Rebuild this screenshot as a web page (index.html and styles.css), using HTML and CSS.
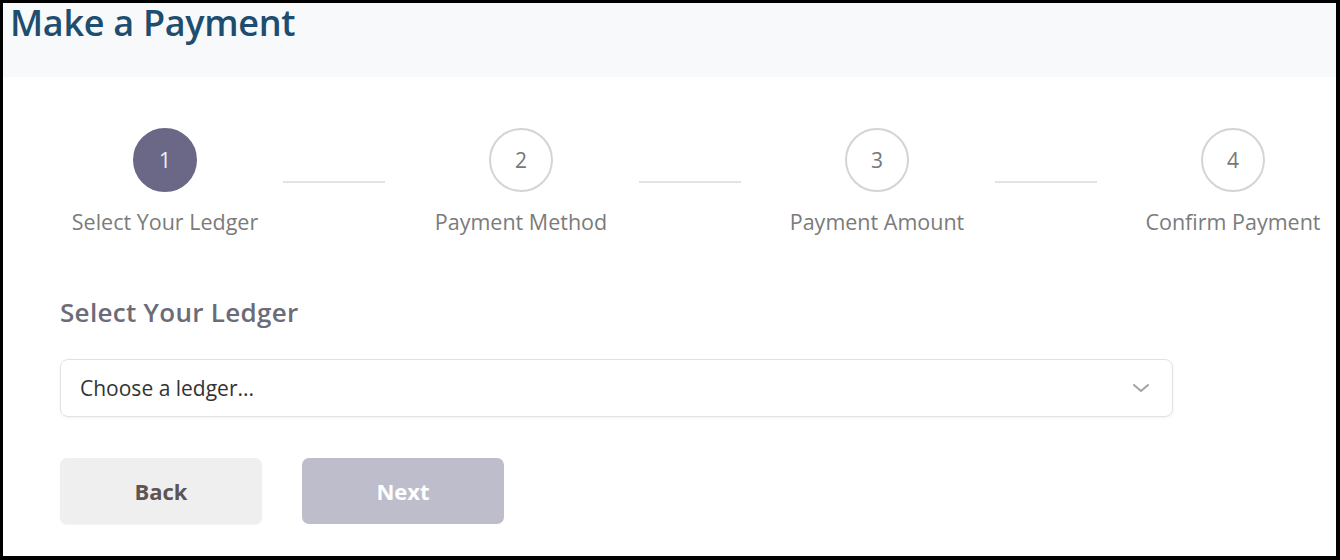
FILE: index.html
```html
<!DOCTYPE html>
<html lang="en">
<head>
<meta charset="utf-8">
<title>Make a Payment</title>
<link rel="stylesheet" href="styles.css">
</head>
<body>
<div class="frame">
  <header class="page-header">
    <h1 class="page-title">Make a Payment</h1>
  </header>
  <main class="content">
    <div class="stepper">
      <div class="step step-active">
        <div class="step-circle">1</div>
        <div class="step-label">Select Your Ledger</div>
      </div>
      <div class="connector"></div>
      <div class="step">
        <div class="step-circle">2</div>
        <div class="step-label">Payment Method</div>
      </div>
      <div class="connector"></div>
      <div class="step">
        <div class="step-circle">3</div>
        <div class="step-label">Payment Amount</div>
      </div>
      <div class="connector"></div>
      <div class="step">
        <div class="step-circle">4</div>
        <div class="step-label">Confirm Payment</div>
      </div>
    </div>

    <h2 class="section-title">Select Your Ledger</h2>

    <div class="select">
      <span class="select-text">Choose a ledger...</span>
      <svg class="chevron" width="18" height="10" viewBox="0 0 18 10" aria-hidden="true">
        <path d="M2 2 L9 8 L16 2" fill="none" stroke="#a3a3a3" stroke-width="2" stroke-linecap="round" stroke-linejoin="round"/>
      </svg>
    </div>

    <div class="actions">
      <button class="btn btn-back" type="button">Back</button>
      <button class="btn btn-next" type="button" disabled>Next</button>
    </div>
  </main>
</div>
</body>
</html>
```

FILE: styles.css
```css
* {
  box-sizing: border-box;
}

html, body {
  margin: 0;
  padding: 0;
  background: #000;
}

body {
  font-family: "Open Sans", "Liberation Sans", sans-serif;
  width: 1340px;
  height: 560px;
  padding: 3px 4px 4px 3px;
}

.frame {
  width: 1333px;
  height: 553px;
  background: #ffffff;
  overflow: hidden;
}

.page-header {
  height: 74px;
  background: #f7f9fb;
  padding: 0 0 0 7px;
}

.page-title {
  margin: 0;
  font-size: 36px;
  font-weight: 600;
  line-height: 40px;
  color: #1d4d6f;
  letter-spacing: -0.3px;
}

.content {
  padding: 51px 0 0 57px;
}

.stepper {
  display: flex;
  align-items: flex-start;
  margin-left: 5px;
}

.step {
  width: 200px;
  display: flex;
  flex-direction: column;
  align-items: center;
}

.step-circle {
  width: 64px;
  height: 64px;
  border-radius: 50%;
  border: 2px solid #d4d4d4;
  background: #fff;
  color: #777;
  font-size: 21px;
  display: flex;
  align-items: center;
  justify-content: center;
}

.step-active .step-circle {
  background: #6b6787;
  border-color: #6b6787;
  color: #e8f4fb;
}

.step-label {
  margin-top: 16px;
  font-size: 21.5px;
  line-height: 28px;
  color: #7b7b7b;
  white-space: nowrap;
}

.connector {
  width: 102px;
  height: 2px;
  margin: 53px 36px 0 18px;
  background: #e4e4e4;
}

.section-title {
  margin: 59px 0 0 0;
  font-size: 26px;
  font-weight: 600;
  line-height: 34px;
  color: #6c6c78;
  letter-spacing: 0.3px;
}

.select {
  margin: 30px 0 0 0;
  width: 1113px;
  height: 58px;
  border: 1px solid #e2e2e2;
  border-radius: 8px;
  box-shadow: 0 1px 3px rgba(0, 0, 0, 0.06);
  display: flex;
  align-items: center;
  justify-content: space-between;
  padding: 0 22px 0 19px;
}

.select-text {
  font-size: 21px;
  color: #333;
}

.chevron {
  display: block;
}

.actions {
  margin: 41px 0 0 0;
  display: flex;
  gap: 40px;
}

.btn {
  width: 202px;
  height: 66px;
  border: none;
  border-radius: 7px;
  font-family: "Open Sans", "Liberation Sans", sans-serif;
  font-size: 22px;
  font-weight: 700;
}

.btn-back {
  background: #efefef;
  color: #5e5454;
  box-shadow: 0 1px 2px rgba(0, 0, 0, 0.05);
}

.btn-next {
  background: #bebdcb;
  color: #fff;
}
```
